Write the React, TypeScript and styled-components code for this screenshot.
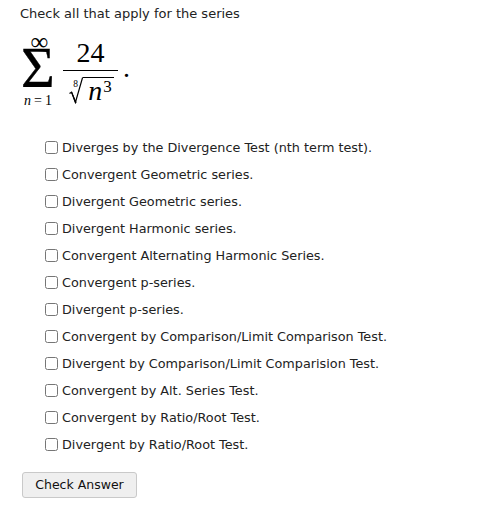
import React from "react";
import styled, { createGlobalStyle } from "styled-components";

const Global = createGlobalStyle`
  html, body { margin: 0; padding: 0; background: #fff; }
  body { font-family: "DejaVu Sans", Verdana, sans-serif; font-size: 13px; color: #222; }
`;

const Page = styled.div`
  padding: 5px 0 0 20px;
`;

const Prompt = styled.div`
  font-size: 13px;
  line-height: 18px;
  height: 18px;
`;

const Formula = styled.div`
  display: flex;
  align-items: flex-start;
  font-family: "Liberation Serif", "Times New Roman", serif;
  color: #000;
`;

const SumBlock = styled.div`
  display: flex;
  flex-direction: column;
  align-items: center;
  width: 34px;
  margin-top: 13px;
  margin-left: 1px;
`;

const Infinity_ = styled.span`
  font-size: 25px;
  line-height: 12px;
  height: 12px;
  margin-left: 3px;
`;

const Sigma = styled.span`
  font-size: 58px;
  line-height: 40px;
  height: 40px;
  margin-top: 0;
  -webkit-text-stroke: 0.4px #000;
`;

const Lower = styled.span`
  font-size: 14px;
  line-height: 14px;
  height: 14px;
  margin-top: 5.8px;
  white-space: nowrap;
`;

const Rel = styled.span`
  margin: 0 3px;
`;

const Var = styled.i`
  font-style: italic;
`;

const Fraction = styled.div`
  display: flex;
  flex-direction: column;
  align-items: center;
  margin-left: 8px;
  margin-top: 15.5px;
  width: 55px;
`;

const Numerator = styled.span`
  font-size: 28px;
  line-height: 28px;
  height: 28px;
  padding-bottom: 3.5px;
`;

const Bar = styled.div`
  width: 100%;
  height: 1px;
  background: #000;
`;

const Denominator = styled.div`
  display: flex;
  align-items: flex-start;
  margin-top: 6px;
  margin-left: 2px;
  position: relative;
`;

const RootIndex = styled.span`
  position: absolute;
  left: 4px;
  top: 3px;
  font-size: 9.5px;
  line-height: 9px;
`;

const RadicalSvg = styled.svg`
  display: block;
  width: 14px;
  height: 27px;
  flex: none;
`;

const Radicand = styled.span`
  display: block;
  border-top: 1px solid #000;
  font-size: 28px;
  line-height: 26px;
  height: 26px;
  padding: 0 2px 0 5px;
  white-space: nowrap;
`;

const Sup = styled.sup`
  font-size: 17px;
  line-height: 0;
  vertical-align: 8px;
  margin-left: 1px;
`;

const Period = styled.span`
  font-size: 28px;
  line-height: 28px;
  margin-left: 5px;
  margin-top: 30.5px;
`;

const List = styled.div`
  display: flex;
  flex-direction: column;
  margin-top: 26px;
  margin-left: 25px;
`;

const Row = styled.label`
  display: flex;
  align-items: center;
  height: 27px;
  font-size: 12.8px;
  color: #222;
  white-space: nowrap;
`;

const Box = styled.input`
  width: 13px;
  height: 13px;
  margin: 0 4px 0 0;
  flex: none;
`;

const Button = styled.button`
  display: block;
  margin-top: 14px;
  margin-left: 2px;
  width: 115px;
  height: 26px;
  font-family: "DejaVu Sans", Verdana, sans-serif;
  font-size: 12.5px;
  color: #111;
  background: #efefef;
  border: 1px solid #c9c9c9;
  border-radius: 3px;
  padding: 0;
`;

const options = [
  "Diverges by the Divergence Test (nth term test).",
  "Convergent Geometric series.",
  "Divergent Geometric series.",
  "Divergent Harmonic series.",
  "Convergent Alternating Harmonic Series.",
  "Convergent p-series.",
  "Divergent p-series.",
  "Convergent by Comparison/Limit Comparison Test.",
  "Divergent by Comparison/Limit Comparision Test.",
  "Convergent by Alt. Series Test.",
  "Convergent by Ratio/Root Test.",
  "Divergent by Ratio/Root Test.",
];

export default function App() {
  return (
    <Page>
      <Global />
      <Prompt>Check all that apply for the series</Prompt>
      <Formula>
        <SumBlock>
          <Infinity_>{"\u221E"}</Infinity_>
          <Sigma>{"\u03A3"}</Sigma>
          <Lower>
            <Var>n</Var>
            <Rel>=</Rel>1
          </Lower>
        </SumBlock>
        <Fraction>
          <Numerator>24</Numerator>
          <Bar />
          <Denominator>
            <RootIndex>8</RootIndex>
            <RadicalSvg viewBox="0 0 14 27">
              <path
                d="M0.5 16.5 L2.6 15.2 L6.4 25.5 L13.6 0.4"
                fill="none"
                stroke="#000"
                strokeWidth="1.2"
              />
              <path d="M2.6 15.2 L6.4 25.5 L7.2 25.5 Z" fill="#000" stroke="#000" strokeWidth="0.8" />
            </RadicalSvg>
            <Radicand>
              <Var>n</Var>
              <Sup>3</Sup>
            </Radicand>
          </Denominator>
        </Fraction>
        <Period>.</Period>
      </Formula>
      <List>
        {options.map((o) => (
          <Row key={o}>
            <Box type="checkbox" />
            {o}
          </Row>
        ))}
      </List>
      <Button>Check Answer</Button>
    </Page>
  );
}
